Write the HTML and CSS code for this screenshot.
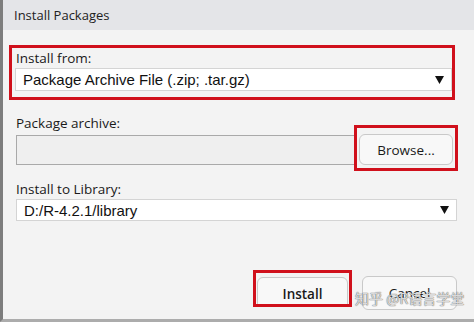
FILE: index.html
```html
<!DOCTYPE html>
<html>
<head>
<meta charset="utf-8">
<link rel="stylesheet" href="styles.css">
</head>
<body>
<div class="window">
  <div class="titlebar">Install Packages</div>
  <div class="content">
    <div class="mark from-box">
      <div class="label">Install from:</div>
      <div class="select">
        <span class="select-text">Package Archive File (.zip; .tar.gz)</span>
        <svg class="arrow" width="9" height="8" viewBox="0 0 9 8"><path d="M0 0H9L4.5 8Z" fill="#111"/></svg>
      </div>
    </div>
    <div class="archive-row">
      <div class="archive-col">
        <div class="label">Package archive:</div>
        <div class="input"></div>
      </div>
      <div class="mark browse-box">
        <div class="button browse">Browse...</div>
      </div>
    </div>
    <div class="library">
      <div class="label">Install to Library:</div>
      <div class="select lib-select">
        <span class="select-text">D:/R-4.2.1/library</span>
        <svg class="arrow" width="9" height="8" viewBox="0 0 9 8"><path d="M0 0H9L4.5 8Z" fill="#111"/></svg>
      </div>
    </div>
    <div class="actions">
      <div class="mark install-box">
        <div class="button install">Install</div>
      </div>
      <div class="button cancel">Cancel</div>
    </div>
  </div>
  <div class="watermark">知乎 @R语言学堂</div>
</div>
</body>
</html>
```
FILE: styles.css
```css
* { box-sizing: border-box; }
html, body { margin: 0; padding: 0; }
body {
  width: 474px;
  height: 322px;
  overflow: hidden;
  background: #f3f3f3;
  font-family: "Open Sans", "Noto Sans", sans-serif;
  color: #1a1a1a;
}
.window {
  position: relative;
  width: 474px;
  height: 322px;
  border-left: 3px solid #7d7d7d;
  border-bottom: 3px solid #acacac;
  background: #f3f3f3;
  display: flex;
  flex-direction: column;
}
.titlebar {
  height: 30px;
  flex: none;
  background: #e4e5e8;
  padding-left: 11px;
  font-size: 13px;
  line-height: 31px;
  color: #222;
}
.content {
  flex: 1;
  display: flex;
  flex-direction: column;
}
.mark { border: 3px solid #d0101b; }
.label {
  font-size: 13.5px;
  line-height: 20px;
  color: #1a1a1a;
}
.from-box {
  margin: 15px 0 0 6px;
  width: 446px;
  height: 55px;
  padding: 0 0 0 3px;
}
.from-box .label { padding-left: 1px; }
.select {
  height: 23px;
  background: #fff;
  border: 1px solid #d4d4d4;
  display: flex;
  align-items: center;
  padding: 0 7px;
  font-family: "Liberation Sans", Arial, sans-serif;
  font-size: 15px;
  color: #111;
}
.select-text { flex: 1; }
.arrow { flex: none; margin-right: 0; }
.archive-row {
  margin-top: 13px;
  display: flex;
  align-items: flex-start;
}
.archive-col {
  flex: 1;
  padding-left: 13px;
}
.input {
  margin-top: 2px;
  height: 30px;
  background: #efefef;
  border: 1px solid #a9a9a9;
  border-right: none;
}
.browse-box {
  margin-top: 12px;
  margin-right: 16px;
  width: 104px;
  height: 46px;
  padding: 6px 2px 0 2px;
}
.button {
  background: #f8f8f8;
  border: 1px solid #c9c9c9;
  border-radius: 6px;
  display: flex;
  align-items: center;
  justify-content: center;
  font-size: 13.5px;
  color: #1a1a1a;
}
.browse { height: 31px; }
.library {
  margin-top: 8px;
  padding-left: 13px;
  padding-right: 17px;
}
.lib-select { height: 22px; }
.actions {
  margin-top: auto;
  margin-bottom: 9px;
  display: flex;
  align-items: flex-start;
  padding-left: 250px;
}
.install-box {
  width: 99px;
  height: 37px;
  padding: 4px 1px 0 1px;
  overflow: hidden;
}
.install { height: 34px; font-weight: 600; }
.cancel {
  margin-left: 10px;
  margin-top: 6px;
  width: 95px;
  height: 34px;
}
.watermark {
  position: absolute;
  left: 352px;
  top: 288px;
  font-family: "Noto Sans CJK SC", sans-serif;
  font-size: 14px;
  color: rgba(255,255,255,0.75);
  text-shadow: 0 0 1px #666, 0 0 1px #666;
  white-space: nowrap;
}
```
